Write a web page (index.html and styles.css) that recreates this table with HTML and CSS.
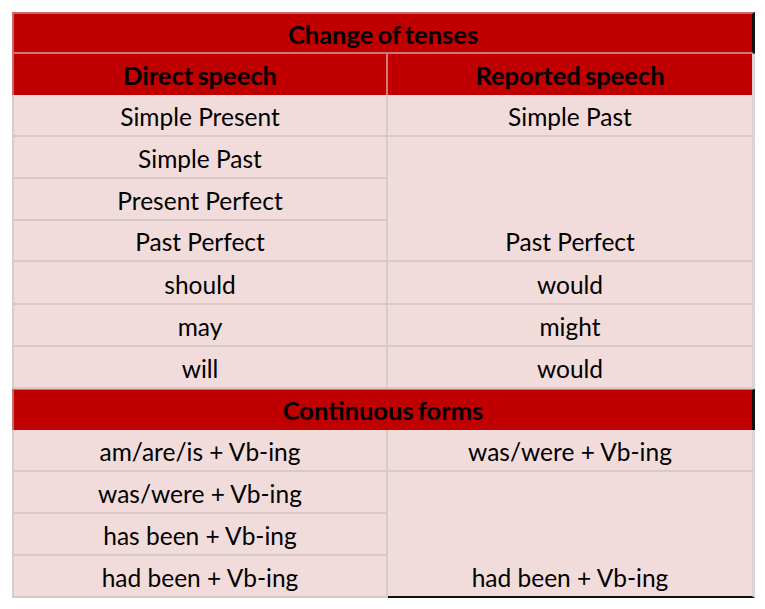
FILE: index.html
```html
<!DOCTYPE html>
<html>
<head>
<meta charset="utf-8">
<link rel="stylesheet" href="styles.css">
</head>
<body>
<div class="sheet">
  <div class="cell band">Change of tenses</div>
  <div class="cell head left">Direct speech</div>
  <div class="cell head right">Reported speech</div>

  <div class="cell left">Simple Present</div>
  <div class="cell right">Simple Past</div>
  <div class="cell left">Simple Past</div>
  <div class="cell right span3">Past Perfect</div>
  <div class="cell left">Present Perfect</div>
  <div class="cell left">Past Perfect</div>
  <div class="cell left">should</div>
  <div class="cell right">would</div>
  <div class="cell left">may</div>
  <div class="cell right">might</div>
  <div class="cell left">will</div>
  <div class="cell right">would</div>

  <div class="cell band band2">Continuous forms</div>

  <div class="cell left">am/are/is + Vb-ing</div>
  <div class="cell right">was/were + Vb-ing</div>
  <div class="cell left">was/were + Vb-ing</div>
  <div class="cell right span3 last">had been + Vb-ing</div>
  <div class="cell left">has been + Vb-ing</div>
  <div class="cell left">had been + Vb-ing</div>
</div>
</body>
</html>
```

FILE: styles.css
```css
html, body {
  margin: 0;
  padding: 0;
  background: #ffffff;
}

.sheet {
  margin: 12px 0 0 12px;
  width: 743px;
  display: grid;
  grid-template-columns: 376px 367px;
  grid-template-rows: 42px 41px 42px 42px 42px 41px 43px 42px 42px 41px 42px 42px 42px 42px;
  font-family: Lato, "Liberation Sans", sans-serif;
  font-size: 24.5px;
  color: #000000;
}

.cell {
  box-sizing: border-box;
  display: flex;
  justify-content: center;
  align-items: flex-end;
  line-height: 24px;
  padding-bottom: 6px;
  background: #f2dcdb;
  border-bottom: 2px solid #d8c8c8;
  white-space: nowrap;
}

.left {
  grid-column: 1;
  border-left: 2px solid #d6cccc;
  border-right: 2px solid #d6cccc;
}

.right {
  grid-column: 2;
  border-right: 3px solid #dcd4d4;
}

.span3 {
  grid-row: span 3;
}

.last {
  border-bottom: 2px solid #111111;
}

.band {
  grid-column: 1 / -1;
  background: #c00000;
  font-weight: 700;
  font-size: 25.5px;
  word-spacing: -2px;
  border-top: 2px solid #c86a6a;
  border-left: 2px solid #c86a6a;
  border-right: 3px solid #111111;
  border-bottom: 2px solid #cf7676;
  padding-bottom: 6px;
}

.band2 {
  border-top: 1px solid #cf7070;
  border-bottom: none;
  padding-bottom: 8px;
}

.head {
  background: #c00000;
  font-weight: 700;
  font-size: 25.5px;
  word-spacing: -2px;
  border-bottom: none;
  padding-bottom: 8px;
}

.head.left {
  border-left: 2px solid #c86a6a;
  border-right: 2px solid #d37a7a;
}

.head.right {
  border-right: 3px solid #dcd4d4;
}
```
